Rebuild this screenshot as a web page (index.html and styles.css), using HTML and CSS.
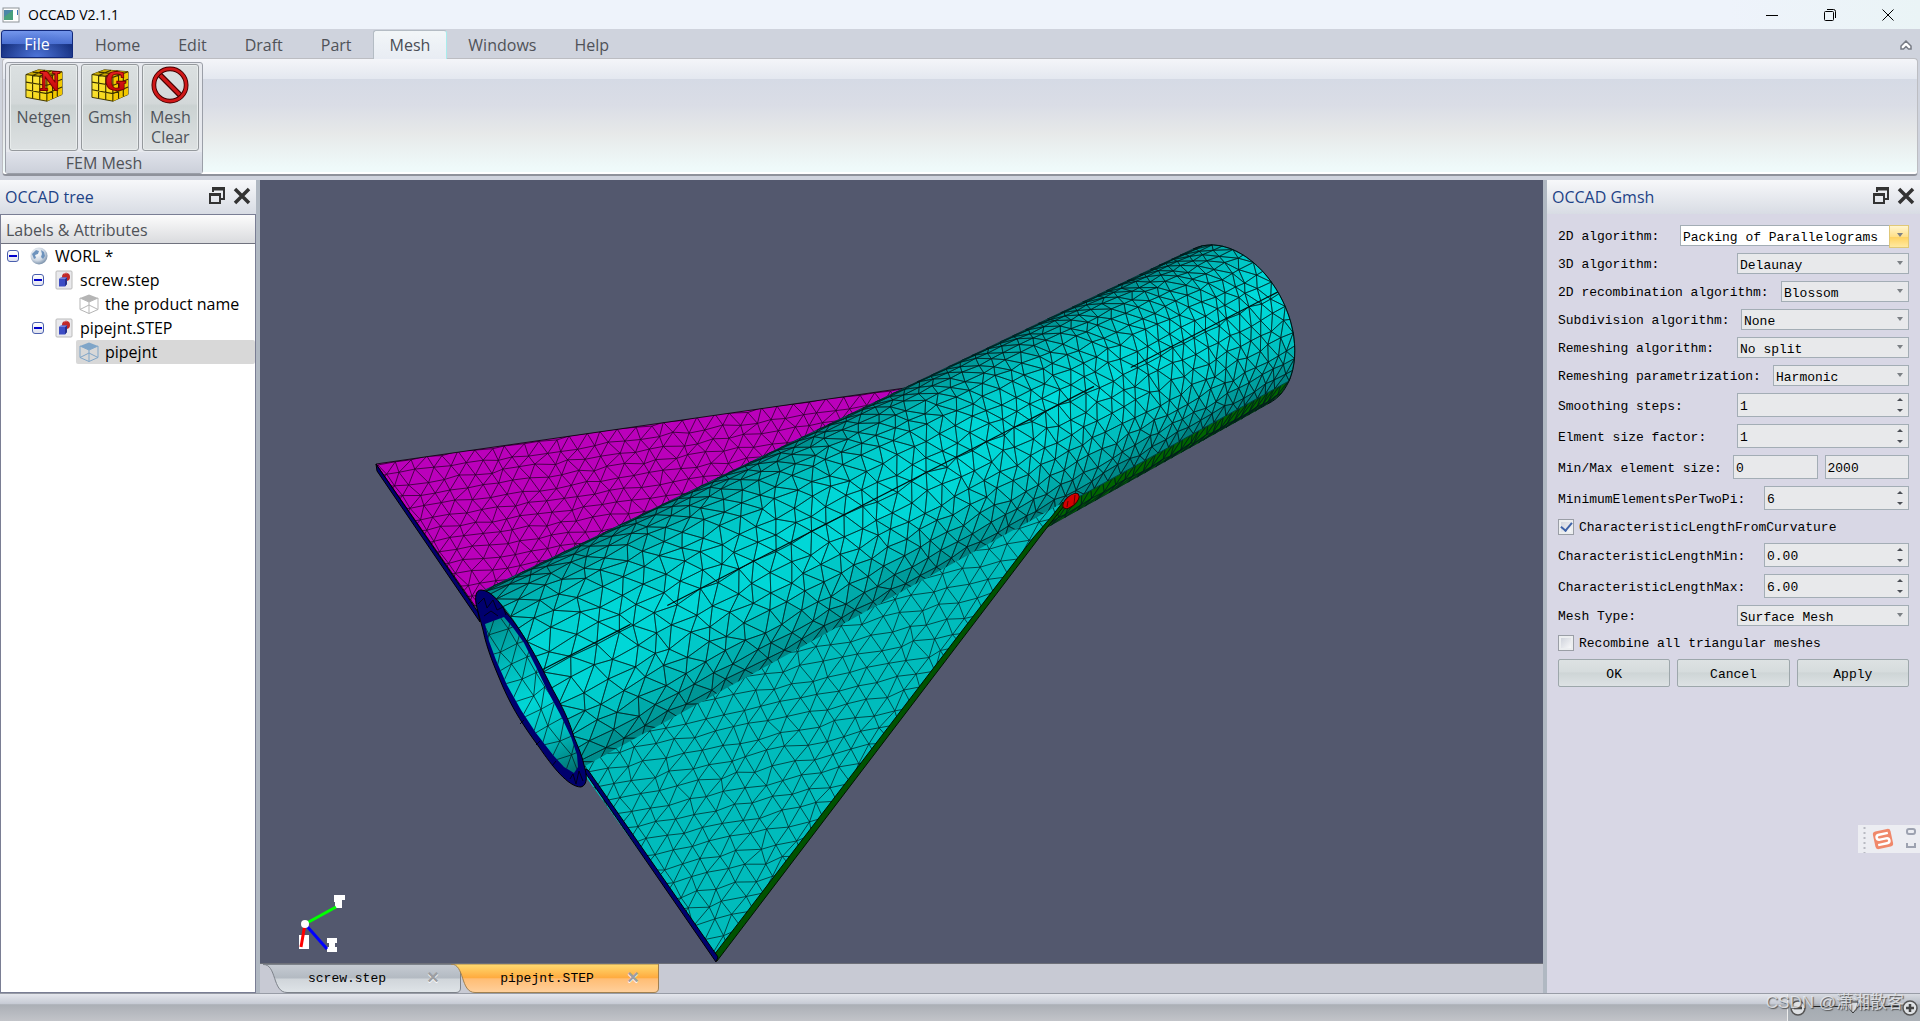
FILE: index.html
```html
<!DOCTYPE html>
<html lang="en">
<head>
<meta charset="utf-8">
<title>OCCAD V2.1.1</title>
<link rel="stylesheet" href="styles.css">
</head>
<body>
<svg class="defs" width="0" height="0" aria-hidden="true">
  <defs>
    <linearGradient id="gold" x1="0" y1="0" x2="1" y2="1"><stop offset="0" stop-color="#fff04a"/><stop offset="1" stop-color="#f0c800"/></linearGradient>
    <linearGradient id="redG" x1="0" y1="0" x2="0" y2="1"><stop offset="0" stop-color="#f02a2a"/><stop offset="1" stop-color="#b80000"/></linearGradient>
    <radialGradient id="globeG" cx=".4" cy=".35" r=".7"><stop offset="0" stop-color="#fff"/><stop offset=".6" stop-color="#ccd6e2"/><stop offset="1" stop-color="#6d86a2"/></radialGradient>
    <linearGradient id="tabGrey" x1="0" y1="0" x2="0" y2="1"><stop offset="0" stop-color="#c6cbd3"/><stop offset=".48" stop-color="#b3bac2"/><stop offset=".52" stop-color="#d0d5da"/><stop offset="1" stop-color="#dfe4e8"/></linearGradient>
    <linearGradient id="tabOrange" x1="0" y1="0" x2="0" y2="1"><stop offset="0" stop-color="#ffdb72"/><stop offset=".48" stop-color="#ffab3f"/><stop offset=".52" stop-color="#ffbd74"/><stop offset="1" stop-color="#ffd09c"/></linearGradient>
    <symbol id="cube" viewBox="0 0 40 40">
      <path d="M1 9 14 4 39 6 39 30 23 37 1 33Z" fill="url(#gold)" stroke="#3a3200"/>
      <path d="M1 9 14 4 39 6 23 12Z" fill="#c9a800"/>
      <path d="M23 12 39 6 39 30 23 37Z" fill="#f2c800"/>
      <path d="M1 9 23 12 39 6M23 12V37M1 17 23 20.500 39 14M1 25 23 29 39 22M8 10V34M15.500 11V35.500M29 10V34.500M34 8V32M8 6.500 32 9M15 11 28 5M8 10 21 4.500" fill="none" stroke="#3a3200" stroke-width="1.200"/>
    </symbol>
    <symbol id="float" viewBox="0 0 18 20">
      <path d="M5 5V1H16V12H12" fill="none" stroke="#333" stroke-width="2"/><path d="M5 2H16" stroke="#333" stroke-width="3"/>
      <rect x="2" y="7" width="10" height="9" fill="none" stroke="#333" stroke-width="2"/><path d="M2 7.500H12" stroke="#333" stroke-width="3"/>
    </symbol>
    <symbol id="cross" viewBox="0 0 18 20"><path d="M2 2 16 16M16 2 2 16" stroke="#333" stroke-width="3.500"/></symbol>
    <symbol id="step" viewBox="0 0 18 20">
      <rect x="1" y="1" width="16" height="18" rx="1" fill="#e9e9ec" stroke="#bbb"/>
      <circle cx="11" cy="7" r="4" fill="#c02828"/><path d="M9 4a4 4 0 0 1 3-1" stroke="#e08080" fill="none"/>
      <path d="M4 9 6 7.500H12V14L10 16.500H4Z" fill="#3c4cc4"/><path d="M10 9 12 7.500V14L10 16.500Z" fill="#26308c"/><path d="M4 9 6 7.500H12L10 9Z" fill="#7482dc"/>
    </symbol>
    <symbol id="box" viewBox="0 0 20 20">
      <path d="M1 4 10 .500 19 4 10 8Z" fill="currentColor"/>
      <path d="M1 4V15.500L10 19.500 19 15.500V4M10 8V19.500M1 15.500 10 11 19 15.500M1 4 10 8 19 4" fill="none" stroke="currentColor"/>
    </symbol>
  </defs>
</svg>
<div class="app">
  <header class="titlebar">
    <svg class="app-icon" width="18" height="16" viewBox="0 0 18 16" aria-hidden="true"><rect x="1" y="1" width="16" height="14" fill="#fff" stroke="#8d9398"/><rect x="2" y="3" width="9" height="10" fill="#48a07d"/><path d="M2 3H11L2 10Z" fill="#4a86a8"/><path d="M15.500 3V8" stroke="#3d74b8"/></svg>
    <h1>OCCAD V2.1.1</h1>
    <div class="window-buttons">
      <button aria-label="Minimize"><svg width="14" height="14"><path d="M1 7.500H13" stroke="#000"/></svg></button>
      <button aria-label="Restore"><svg width="14" height="14" fill="none" stroke="#000"><rect x="1.500" y="3.500" width="9" height="9" rx="1"/><path d="M4 1.500H10.500Q12.500 1.500 12.500 3.500V10"/></svg></button>
      <button aria-label="Close"><svg width="14" height="14"><path d="M1.500 1.500 12.500 12.500M12.500 1.500 1.500 12.500" stroke="#000"/></svg></button>
    </div>
  </header>
  <nav class="tabs">
    <button class="tab file">File</button>
    <button class="tab">Home</button>
    <button class="tab">Edit</button>
    <button class="tab">Draft</button>
    <button class="tab">Part</button>
    <button class="tab active">Mesh</button>
    <button class="tab">Windows</button>
    <button class="tab">Help</button>
    <button class="collapse" aria-label="Collapse ribbon"><svg width="12" height="10" viewBox="0 0 12 10"><path d="M6 1 11 6V9H8.500L6 6.500 3.500 9H1V6Z" fill="#fff" stroke="#777b84" stroke-width="1.500"/></svg></button>
  </nav>
  <section class="ribbon">
    <div class="group">
      <div class="tools">
        <button class="tool netgen"><svg width="40" height="38" viewBox="0 0 40 40"><use href="#cube"/><text x="16" y="25" class="glyph">N</text></svg><span>Netgen</span></button>
        <button class="tool"><svg width="40" height="38" viewBox="0 0 40 40"><use href="#cube"/><text x="15" y="25" class="glyph">G</text></svg><span>Gmsh</span></button>
        <button class="tool"><svg width="40" height="38" viewBox="0 0 40 40" fill="none"><path d="M8 8 32 32" stroke="#400" stroke-width="6"/><path d="M8 8 32 32" stroke="#d01818" stroke-width="3.500"/><circle cx="20" cy="20" r="17" stroke="#400" stroke-width="5"/><circle cx="20" cy="20" r="17" stroke="#d01818" stroke-width="3"/></svg><span>Mesh<br>Clear</span></button>
      </div>
      <div class="caption">FEM Mesh</div>
    </div>
  </section>
  <main class="work">
    <aside class="tree-panel">
      <div class="dock-head"><h2>OCCAD tree</h2>
        <button aria-label="Float"><svg width="18" height="20"><use href="#float"/></svg></button>
        <button aria-label="Close"><svg width="18" height="20"><use href="#cross"/></svg></button>
      </div>
      <div class="tree">
        <div class="tree-head">Labels &amp; Attributes</div>
        <ul>
          <li><div class="node"><button class="toggle" aria-label="Collapse WORL"></button><svg width="18" height="18" viewBox="0 0 18 18"><circle cx="9" cy="9" r="8.500" fill="url(#globeG)"/><path d="M2 7 6 3 9 4 8 7 5 8 6 11 4 12ZM11 3 14 5 15 9 13 12 11 10 12 7Z" fill="#6d93bd"/></svg>WORL *</div>
            <ul>
              <li><div class="node"><button class="toggle" aria-label="Collapse screw.step"></button><svg width="18" height="20"><use href="#step"/></svg>screw.step</div>
                <ul><li><div class="node leaf grey"><svg width="20" height="20"><use href="#box"/></svg><span>the product name</span></div></li></ul></li>
              <li><div class="node"><button class="toggle" aria-label="Collapse pipejnt.STEP"></button><svg width="18" height="20"><use href="#step"/></svg>pipejnt.STEP</div>
                <ul><li><div class="node leaf selected"><svg width="20" height="20"><use href="#box"/></svg><span>pipejnt</span></div></li></ul></li>
            </ul></li>
        </ul>
      </div>
    </aside>
    <section class="view">
      <svg class="scene" id="scene" viewBox="260 180 1283 783" role="img" aria-label="Triangulated pipe joint"></svg>
      <div class="doc-tabs">
        <button class="doc"><svg viewBox="0 0 200 29" width="200" height="29"><path d="M0 0.500C14 0 9 28.500 24 28.500H193Q197.500 28.500 197.500 24V.500Z" fill="url(#tabGrey)" stroke="#7d828a"/></svg><span>screw.step</span><i>×</i></button>
        <button class="doc current"><svg viewBox="0 0 208 29" width="208" height="29"><path d="M0 0C14 0 9 28.500 24 28.500H203Q207.500 28.500 207.500 24V0Z" fill="url(#tabOrange)" stroke="#a08050"/></svg><span>pipejnt.STEP</span><i>×</i></button>
      </div>
    </section>
    <aside class="gmsh-panel">
      <div class="dock-head"><h2>OCCAD Gmsh</h2>
        <button aria-label="Float"><svg width="18" height="20"><use href="#float"/></svg></button>
        <button aria-label="Close"><svg width="18" height="20"><use href="#cross"/></svg></button>
      </div>
      <form class="form">
        <div class="field"><label for="a2d">2D algorithm:</label><span class="combo hot w-xl"><select id="a2d"><option>Packing of Parallelograms</option></select></span></div>
        <div class="field"><label for="a3d">3D algorithm:</label><span class="combo w-l"><select id="a3d"><option>Delaunay</option></select></span></div>
        <div class="field"><label for="rec">2D recombination algorithm:</label><span class="combo w-xs"><select id="rec"><option>Blossom</option></select></span></div>
        <div class="field"><label for="sub">Subdivision algorithm:</label><span class="combo w-ml"><select id="sub"><option>None</option></select></span></div>
        <div class="field"><label for="rem">Remeshing algorithm:</label><span class="combo w-l"><select id="rem"><option>No split</option></select></span></div>
        <div class="field"><label for="par">Remeshing parametrization:</label><span class="combo w-s"><select id="par"><option>Harmonic</option></select></span></div>
        <div class="field"><label for="smo">Smoothing steps:</label><span class="spin w-l"><input id="smo" value="1"></span></div>
        <div class="field"><label for="fac">Elment size factor:</label><span class="spin w-l"><input id="fac" value="1"></span></div>
        <div class="field"><label for="min">Min/Max element size:</label><span class="pair"><input id="min" value="0"><input aria-label="Max element size" value="2000"></span></div>
        <div class="field"><label for="pi">MinimumElementsPerTwoPi:</label><span class="spin w-m"><input id="pi" value="6"></span></div>
        <div class="check"><input type="checkbox" id="cur" checked><label for="cur">CharacteristicLengthFromCurvature</label></div>
        <div class="field"><label for="cmin">CharacteristicLengthMin:</label><span class="spin w-m"><input id="cmin" value="0.00"></span></div>
        <div class="field"><label for="cmax">CharacteristicLengthMax:</label><span class="spin w-m"><input id="cmax" value="6.00"></span></div>
        <div class="field"><label for="typ">Mesh Type:</label><span class="combo w-l"><select id="typ"><option>Surface Mesh</option></select></span></div>
        <div class="check"><input type="checkbox" id="all"><label for="all">Recombine all triangular meshes</label></div>
        <div class="actions"><button type="button">OK</button><button type="button">Cancel</button><button type="button">Apply</button></div>
      </form>
      <div class="ime">
        <svg width="62" height="28" viewBox="0 0 62 28" aria-hidden="true"><path d="M6.500 2V28" stroke="#b8bac2" stroke-width="2" stroke-dasharray="2 3"/><g transform="rotate(-12 25 14)"><rect x="16" y="5" width="18" height="18" rx="3" fill="#f0886a"/><path d="M31 9H22Q19 9 19 11.500T22 14H28Q31 14 31 16.500T28 19H19" fill="none" stroke="#fff" stroke-width="2.500"/></g><rect x="49" y="4" width="8" height="5" rx="2" fill="none" stroke="#9da2b0" stroke-width="2"/><path d="M49 18V22H57V18" fill="none" stroke="#9da2b0" stroke-width="2"/></svg>
      </div>
    </aside>
  </main>
  <footer class="status">
    <div class="zoombar">
      <svg width="132" height="27" viewBox="0 0 132 27" aria-hidden="true"><path d="M22 12.500H112" stroke="#222"/><path d="M60 8H70V13L65 19 60 13Z" fill="#d8dade" stroke="#333"/><g fill="#dfe2e5" stroke="#555" stroke-width="1.500"><circle cx="10" cy="14" r="7"/><circle cx="122" cy="14" r="7"/></g><path d="M6 14H14M118 14H126M122 10V18" stroke="#444" stroke-width="2.500"/></svg>
    </div>
    <span class="mark">CSDN @潇湘散客</span>
  </footer>
</div>
<script src="scene.js"></script>
</body>
</html>
```
FILE: styles.css
```css
* { box-sizing: border-box; }
body { margin: 0; font: 16px/20px "Open Sans", "Noto Sans", sans-serif; color: #000; background: #cfd3dd; }
button { font: inherit; color: inherit; border: 0; background: none; padding: 0; }
h1, h2 { margin: 0; font-weight: 400; }
ul { list-style: none; margin: 0; padding: 0; }
svg { display: block; flex: none; }
.defs { position: absolute; }
.app { display: flex; flex-direction: column; min-height: 100vh; }

.titlebar { display: flex; align-items: center; height: 29px; padding: 0 3px 0 2px; background: linear-gradient(90deg, #eef3fb 90%, #eaf4f6); }
.titlebar h1 { font-size: 14px; margin-left: 8px; }
.window-buttons { display: flex; margin-left: auto; }
.window-buttons button { width: 58px; height: 28px; display: grid; place-items: center; }

.tabs { display: flex; gap: 4px; height: 30px; padding: 1px 8px 0 1px; background: #cfd3dd; }
.tab { padding: 0 16px; height: 29px; color: #4f5258; border: 1px solid transparent; border-bottom: 0; border-radius: 3px 3px 0 0; }
.tab.file { width: 72px; height: 28px; margin-right: 1px; color: #fff; border: 1px solid #12297c; background: radial-gradient(ellipse at 50% 100%, #4d74d8 0, rgba(60, 95, 200, 0) 75%), linear-gradient(#7396ec, #4a6ed0 50%, #16307e 52%, #1b3588); }
.tab.active { position: relative; z-index: 1; color: #4a4d55; border-color: #b4bcc4; border-right-color: #a8ecec; background: linear-gradient(#f2f6f8, #e8ecf3); }
.collapse { margin-left: auto; }

.ribbon { height: 118px; margin: -1px 2px 4px; padding: 3px 2px; border: 1px solid #bcbdc2; border-bottom: 2px solid #8f929b; border-radius: 4px; box-shadow: inset 0 -2px #fff; background: linear-gradient(#f4f5f9, #e4e8f0 17%, #d5dae5 17%, #dadde6 40%, #e7e9e9 65%, #effafa 95%); }
.group { width: 198px; height: 112px; border: 1px solid #9b9fa8; border-radius: 3px; background: #e7e9ee; display: flex; flex-direction: column; }
.tools { display: flex; gap: 3px; padding: 1px 3px; }
.tool { width: 58px; height: 87px; padding-top: 1px; display: flex; flex-direction: column; align-items: center; gap: 3px; color: #4f545b; border: 1px solid #95999d; border-radius: 3px; box-shadow: inset 0 0 0 1px #e8ecec; background: linear-gradient(#dbe0e1, #d3d8d9 45%, #cbd2d2 48%, #dde1e2); }
.tool.netgen { width: 70px; }
.tool svg { overflow: visible; }
.glyph { font: bold 28px "Liberation Serif", serif; fill: url(#redG); stroke: #700; stroke-width: 2; paint-order: stroke; }
.caption { flex: 1; display: grid; place-items: center; color: #4f5258; background: linear-gradient(#dfe2ea, #ccd0da); }

.work { flex: 1; display: flex; background: #b0b8c2; }
.dock-head { display: flex; align-items: center; height: 34px; padding: 0 5px; background: linear-gradient(#f7f8fa, #d8dce4); gap: 7px; }
.dock-head h2 { font-size: 16px; color: #1e4387; margin-right: auto; }
.tree-panel { width: 256px; margin-right: 4px; display: flex; flex-direction: column; }
.tree { flex: 1; border: 1px solid #7a7e94; background: #fff; }
.tree-head { height: 29px; padding: 5px 5px 4px; color: #4f5258; background: linear-gradient(#fcfcfc, #dadbde); border-bottom: 1px solid #70727e; }
.node { display: flex; align-items: center; height: 24px; padding-left: 6px; gap: 7px; }
.toggle { width: 12px; height: 12px; margin-right: 4px; border: 1px solid #4a5fae; border-radius: 3px; background: linear-gradient(#00c, #00c) center / 8px 2px no-repeat, linear-gradient(#fff, #dfe2ee); }
.tree li li .node { padding-left: 31px; }
.tree li li .leaf { margin-left: 75px; padding-left: 3px; gap: 6px; color: #7fa5c8; }
.leaf span { color: #000; }
.tree .leaf.grey { color: #b5b5b5; }
.selected { background: #d8d8d8; border-radius: 2px; }

.view { flex: 1; min-width: 0; display: flex; flex-direction: column; background: #53586e; }
.scene { flex: 1; width: 100%; min-height: 0; }
.doc-tabs { display: flex; height: 30px; padding-left: 3px; background: #c8cad4; border-top: 1px solid #6c6f78; font: 13px/29px "Liberation Mono", monospace; }
.doc { display: grid; width: 200px; height: 29px; align-items: center; }
.doc > * { grid-area: 1 / 1; }
.doc svg { justify-self: start; }
.doc span { justify-self: center; padding-right: 32px; }
.doc i { justify-self: end; font: bold 20px/24px "Liberation Mono", monospace; color: #9c9ea2; padding-right: 24px; text-shadow: 0 1px #fff; }
.doc.current { width: 208px; margin-left: -12px; }
.doc.current span { padding-right: 16px; }
.doc.current i { padding-right: 20px; }

.gmsh-panel { width: 373px; margin-left: 4px; display: flex; flex-direction: column; background: #d8d7e5; }
.form { display: flex; flex-direction: column; gap: 7px; padding: 11px; font: 13px/19px "Liberation Mono", monospace; }
.field { display: flex; justify-content: space-between; align-items: center; white-space: nowrap; }
.form label { padding-top: 2px; }
.form select, .form input:not([type=checkbox]) { font: inherit; color: #000; width: 100%; border: 1px solid #a3adb5; background: #e8e9eb; border-radius: 0; padding: 2px 2px 0; margin: 0; display: block; appearance: none; outline: 0; }
.form select { height: 21px; }
.form input:not([type=checkbox]) { height: 24px; }
.combo, .spin { position: relative; flex: none; }
.w-xl { width: 229px; }
.w-l { width: 172px; }
.w-ml { width: 168px; }
.w-m { width: 145px; }
.w-s { width: 136px; }
.w-xs { width: 128px; }
.combo::after { content: ""; position: absolute; right: 6px; top: 8px; border: 3px solid transparent; border-top: 4px solid #7c8085; }
.combo.hot select { background: #fff; }
.combo.hot::before { content: ""; position: absolute; right: 0; top: 0; width: 18px; height: 21px; border: 1px solid #e0c878; background: linear-gradient(#fff5cf, #ffe08a 50%, #ffd260 52%, #ffe9a0); }
.spin::before, .spin::after { content: ""; position: absolute; right: 6px; border: 3px solid transparent; }
.spin::before { top: 2px; border-bottom-color: #4a4e55; }
.spin::after { bottom: 2px; border-top-color: #4a4e55; }
.pair { display: flex; gap: 7px; width: 176px; }
.check { display: flex; align-items: center; gap: 5px; height: 19px; }
.check input { appearance: none; width: 16px; height: 16px; margin: 0; border: 1px solid #9a9ea6; background: linear-gradient(135deg, #c8ccd6, #fff); box-shadow: inset 0 0 0 2px #eceef0; display: grid; place-items: center; }
.check input:checked::before { content: ""; width: 5px; height: 9px; margin-top: -3px; border: solid #3d62a8; border-width: 0 2px 2px 0; transform: rotate(40deg); }
.actions { display: flex; gap: 7px; }
.actions button { flex: 1; height: 28px; padding-top: 2px; border: 1px solid #9da7ab; border-radius: 2px; background: linear-gradient(#dde2e3, #d6dcdd 45%, #ced5d6 50%, #dde2e4); }
.ime { margin: auto 0 140px auto; background: #ecedf2; }

.status { display: flex; position: relative; height: 28px; border-top: 1px solid #989ca6; background: linear-gradient(#e4e6ec, #c8ccd6 35%, #abafb6 40%, #c2c4c9); }
.zoombar { margin-left: auto; border-left: 1px solid #eee; background: linear-gradient(#d8dbe2, #b8bdc6 35%, #a4aab1 40%, #acb1b7); }
.mark { position: absolute; right: 16px; top: -4px; font: 17px/26px "Liberation Sans", "Noto Sans CJK SC", sans-serif; color: rgba(235, 236, 240, .8); text-shadow: 1px 1px 1px #555; }
```
FILE: scene.js
```js
(function () {
  var NS = "http://www.w3.org/2000/svg";
  var scene = document.getElementById("scene");
  var seed = 7;
  function rnd() { seed = (seed * 16807) % 2147483647; return seed / 2147483647 - 0.5; }
  function add(name, attrs, parent) {
    var el = document.createElementNS(NS, name);
    for (var k in attrs) el.setAttribute(k, attrs[k]);
    (parent || scene).appendChild(el);
    return el;
  }
  function line(points) {
    return "M" + points.map(function (p) { return p[0].toFixed(1) + " " + p[1].toFixed(1); }).join("L");
  }
  var rad = Math.PI / 180;

  // Point on the pipe: u runs along the axis, t is the angle from the upper silhouette.
  function pipe(u, t) {
    var r = 110 - 24 * u;
    var a = 178 + 789 * u + (20 + 38 * u) * Math.sin(t);
    var p = 852 - 24 * u - r * Math.cos(t);
    return [0.901 * a + 0.434 * p, -0.434 * a + 0.901 * p];
  }

  // Triangles of the same shade share one path.
  function paint(tris, stroke) {
    var groups = {};
    tris.forEach(function (t) { groups[t[1]] = (groups[t[1]] || "") + line(t[0]) + "Z"; });
    for (var c in groups) add("path", { d: groups[c], fill: c, stroke: c, "stroke-width": 0.6 });
    var all = tris.map(function (t) { return line(t[0]) + "Z"; }).join("");
    add("path", { d: all, fill: "none", stroke: stroke, "stroke-width": 0.6 });
  }

  function surface(u0, u1, t0, t1, cols, rows, colour) {
    var grid = [], tris = [], i, j;
    for (j = 0; j <= rows; j++) {
      grid.push([]);
      for (i = 0; i <= cols; i++) {
        var edge = i === 0 || i === cols;
        var s = (i + (edge ? 0 : (j % 2 ? 0.25 : -0.25) + rnd() * 0.4)) / cols;
        var inner = j > 0 && j < rows && !edge;
        var t = t0 + (t1 - t0) * (j + (inner ? rnd() * 0.35 : 0)) / rows;
        grid[j].push({ u: u0 + (u1 - u0) * s * 1.5 / (1 + 0.5 * s), t: t });
      }
    }
    function tri(a, b, c) {
      tris.push([[a, b, c].map(function (v) { return pipe(v.u, v.t); }), colour((a.t + b.t + c.t) / 3)]);
    }
    for (j = 0; j < rows; j++) for (i = 0; i < cols; i++) {
      var a = grid[j][i], b = grid[j][i + 1], c = grid[j + 1][i], d = grid[j + 1][i + 1];
      if (j % 2) { tri(a, b, d); tri(a, c, d); } else { tri(a, b, c); tri(b, c, d); }
    }
    paint(tris, "#001c1c");
  }

  var clips = 0;
  // Flat face filled with a jittered triangle lattice.
  function face(points, fill, stroke, origin, e1, e2, n, m) {
    var id = "face" + (clips++);
    var d = line(points) + "Z";
    add("path", { d: d }, add("clipPath", { id: id }));
    add("path", { d: d, fill: fill });
    var g = [], i, j, out = "";
    for (j = 0; j <= m; j++) {
      g.push([]);
      for (i = 0; i <= n; i++) {
        var k = i - (j >> 1) + rnd() * 0.3, l = j + rnd() * 0.3;
        g[j].push([origin[0] + e1[0] * k + e2[0] * l, origin[1] + e1[1] * k + e2[1] * l]);
      }
    }
    for (j = 0; j < m; j++) for (i = 0; i < n; i++) {
      out += line([g[j][i + 1], g[j][i], g[j + 1][i]]);
      out += j % 2 ? line([g[j][i], g[j + 1][i + 1]]) : line([g[j][i + 1], g[j + 1][i]]);
    }
    add("path", { d: out, fill: "none", stroke: stroke, "stroke-width": 0.75, "clip-path": "url(#" + id + ")" });
    return d;
  }

  function teal(t) {
    var k = Math.cos((t - 84 * rad) * (t > 84 * rad ? 1.15 : 1));
    var v = Math.round((94 + 121 * k + rnd() * 9) / 5) * 5;
    return "rgb(0," + v + "," + v + ")";
  }

  // Upper fin and its thin edge
  var upper = face([[376, 464], [905, 388], [700, 500], [490, 600], [475, 606]], "#bb00bb", "#260026", [330, 471], [16, -2.3], [8, 11], 46, 16);
  add("path", { d: upper, fill: "none", stroke: "#000", "stroke-width": 0.8 });
  add("path", { d: "M376 464 478 612 480 622 377 471Z", fill: "#00006e", stroke: "#000" });

  // Pipe wall, then its underside
  surface(0.6, 1, 148 * rad, Math.PI, 30, 2, function () { return "#006400"; });
  surface(0, 1, 0, 150 * rad, 48, 16, teal);

  // Lower fin follows the crease on the pipe
  var fin = [], u;
  for (u = 0; u <= 0.67; u += 0.03) fin.push(pipe(u, 147 * rad));
  fin.push([1062, 503], [1052, 517], [1033, 538], [716, 958]);
  face(fin, "#00bcbc", "#002626", [420, 480], [19, -4], [8, 14], 64, 40);
  add("path", { d: "M1063 502 1052 516 1033 538 714 955 717 961 1039 538 1049 525 1064 506Z", fill: "#005200", stroke: "#001400" });
  add("path", { d: "M582 768 588 770 718 957 716 962Z", fill: "#00006e", stroke: "#000" });

  // Feature lines and the end rim
  [[0.0, 0.12], [0.17, 0.75], [0.8, 1]].forEach(function (r) {
    add("path", { d: line([pipe(r[0], 83 * rad), pipe(r[1], 83 * rad)]), stroke: "#001010", "stroke-width": 1.2 });
  });
  var rim = [];
  for (u = 0; u <= 180; u += 5) rim.push(pipe(1, u * rad));
  add("path", { d: line(rim), fill: "none", stroke: "#001010" });
  add("ellipse", { cx: 1071, cy: 501, rx: 10, ry: 5, transform: "rotate(-42 1071 501)", fill: "#d40000", stroke: "#300" });
  add("path", { d: "M1067 507 1068 501M1074 504 1075 495", stroke: "#400", "stroke-width": 0.8 });

  // Open end: blue ring with the bore inside
  add("path", {
    d: "M481 590C476 590 474 597 477 608L483 630C487 650 495 668 503 687C513 710 525 728 539 747C552 766 568 787 581 787C588 785 587 775 584 765C582 755 578 747 574 737C569 720 562 706 553 690C545 674 537 658 528 643C521 632 514 621 506 612C500 602 490 590 481 590Z",
    fill: "#00006e", stroke: "#000"
  });
  add("path", { d: "M478 604 484 598 487 608 493 600 497 610 503 607 506 615M484 616 491 611 498 616M570 779 573 774 576 784 579 771 583 781M520 724 524 720M536 745 540 741M552 766 556 761", fill: "none", stroke: "#000018" });
  var grad = add("linearGradient", { id: "bore", gradientUnits: "userSpaceOnUse", x1: 480, y1: 620, x2: 556, y2: 778 });
  [[0, "#008a8a"], [0.3, "#00bcbc"], [0.55, "#00d6d6"], [0.78, "#00bcbc"], [1, "#007474"]].forEach(function (st) {
    add("stop", { offset: st[0], "stop-color": st[1] }, grad);
  });
  var bore = [[485, 624], [504, 617], [514, 629], [524, 643], [536, 667], [547, 690], [560, 714], [571, 737], [577, 755], [578, 767], [574, 773], [564, 767], [553, 755], [536, 733], [521, 710], [507, 685], [496, 660], [489, 641]];
  face(bore, "url(#bore)", "#002020", [440, 560], [17, -7], [10, 15], 26, 20);

  // Orientation triad
  add("path", { d: "M334 895H345V900H342V908H335V902H334ZM299 935H309V949H299ZM327 938H337V943H335V947H337V952H327V947H329V943H327Z", fill: "#fff" });
  add("path", { d: "M305 924 336 907", stroke: "#0f0", "stroke-width": 3 });
  add("path", { d: "M305 924 301 947", stroke: "#f00", "stroke-width": 3 });
  add("path", { d: "M305 924 327 949", stroke: "#00f", "stroke-width": 3 });
  add("circle", { cx: 305, cy: 924, r: 4, fill: "#fff" });
})();
```
